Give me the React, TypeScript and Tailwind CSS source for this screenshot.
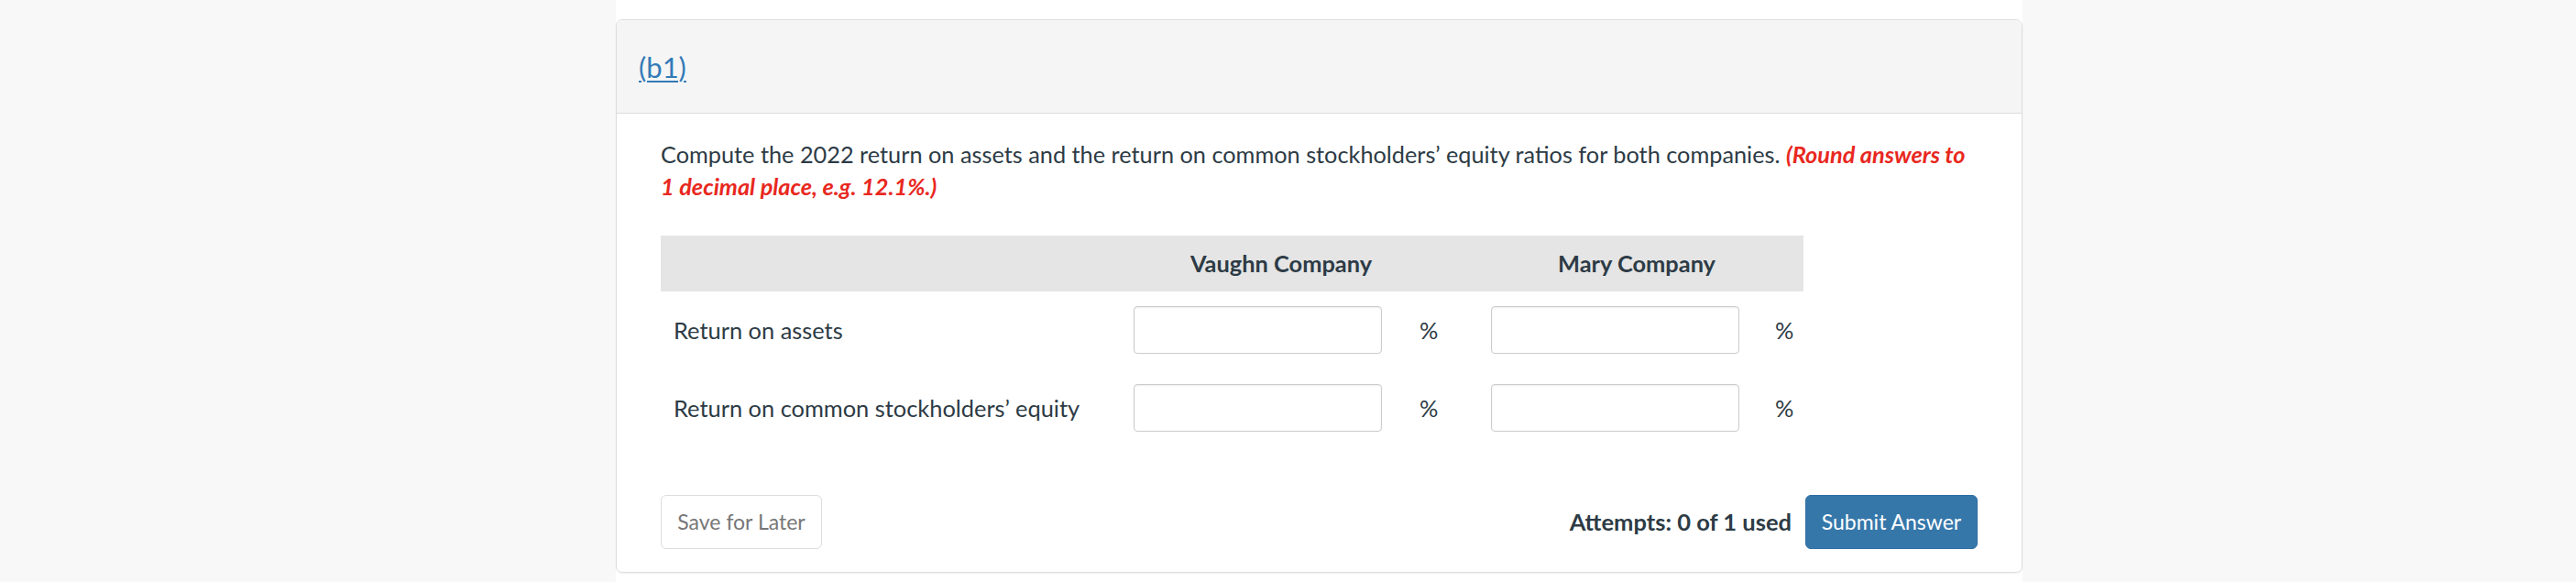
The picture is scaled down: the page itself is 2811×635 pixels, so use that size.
import React from "react";

const font = { fontFamily: "Lato, 'Open Sans', sans-serif" };

function PctInput() {
  return (
    <input
      type="text"
      className="w-[271px] h-[52px] bg-white border border-[#cccccc] rounded-[4px] shadow-[inset_0_1px_2px_rgba(0,0,0,0.075)] outline-none"
    />
  );
}

function Row({ label }: { label: string }) {
  return (
    <div className="flex items-center h-[52px]">
      <div className="w-[516px] pl-[14px] text-[25.4px] text-[#2d3b45] leading-[35px]">{label}</div>
      <PctInput />
      <span className="ml-[41px] w-[78px] text-[25.4px] text-[#2d3b45]">%</span>
      <PctInput />
      <span className="ml-[39px] text-[25.4px] text-[#2d3b45]">%</span>
    </div>
  );
}

export default function App() {
  return (
    <div className="min-h-[635px] w-full bg-[#f8f8f8]" style={font}>
      <div className="ml-[672px] w-[1535px] bg-white pt-[21px] pb-[11px]">
        <div className="border border-[#dddddd] rounded-[7px] shadow-[0_1px_2px_rgba(0,0,0,0.06)]">
          <div className="h-[102px] bg-[#f5f5f5] border-b border-[#dddddd] rounded-t-[7px] flex items-center pl-[24px]">
            <a href="#" className="text-[31px] text-[#337ab7] underline underline-offset-[3px] decoration-[2px] leading-[36px]">
              (b1)
            </a>
          </div>
          <div className="px-[48px] pt-[27px] pb-[25px]">
            <p className="text-[25.3px] leading-[35px] text-[#2d3b45] w-[1428px]">
              Compute the 2022 return on assets and the return on common stockholders’ equity ratios for both companies.{" "}
              <span className="font-bold italic text-[#e8281e]">(Round answers to 1 decimal place, e.g. 12.1%.)</span>
            </p>
            <div className="mt-[36px] w-[1247px]">
              <div className="flex h-[61px] bg-[#e5e5e5] items-center font-bold text-[25.4px] text-[#2d3b45]">
                <div className="w-[471px]"></div>
                <div className="w-[412px] text-center">Vaughn Company</div>
                <div className="w-[364px] text-center">Mary Company</div>
              </div>
              <div className="mt-[16px] flex flex-col gap-[33px]">
                <Row label="Return on assets" />
                <Row label="Return on common stockholders’ equity" />
              </div>
            </div>
            <div className="mt-[69px] flex items-center justify-between">
              <button className="h-[59px] w-[176px] border border-[#dddddd] rounded-[6px] bg-white text-[#777777] text-[23px]">
                Save for Later
              </button>
              <div className="flex items-center gap-[15px]">
                <span className="font-bold text-[25.5px] text-[#2d3b45]">Attempts: 0 of 1 used</span>
                <button className="h-[59px] w-[188px] rounded-[6px] bg-[#3677aa] border border-[#2e6da4] text-white text-[23px]">
                  Submit Answer
                </button>
              </div>
            </div>
          </div>
        </div>
      </div>
    </div>
  );
}
